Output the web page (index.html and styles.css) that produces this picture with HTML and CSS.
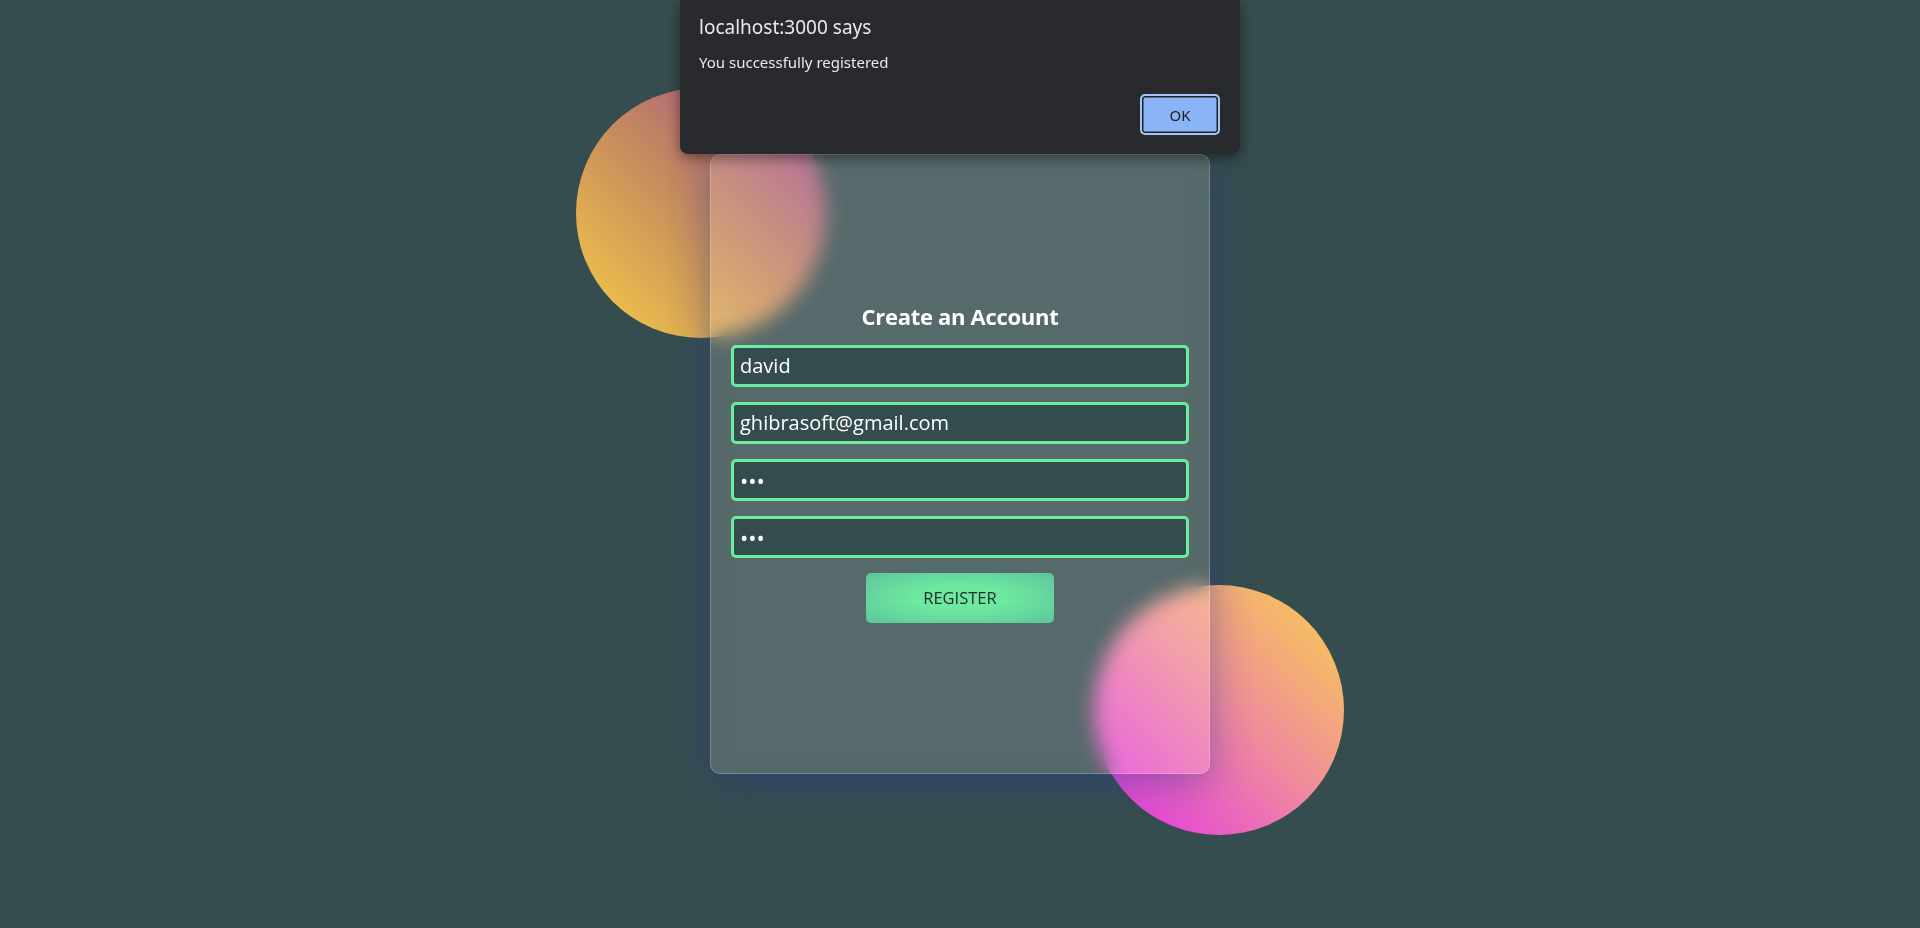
FILE: index.html
```html
<!DOCTYPE html>
<html lang="en">
<head>
<meta charset="utf-8">
<title>Register</title>
<link rel="stylesheet" href="styles.css">
</head>
<body>
<main class="scene">
  <div class="shape shape-a"></div>
  <div class="shape shape-b"></div>
  <form class="card">
    <h2 class="title">Create an Account</h2>
    <input class="field" type="text" value="david">
    <input class="field" type="email" value="ghibrasoft@gmail.com">
    <input class="field" type="password" value="abc">
    <input class="field" type="password" value="abc">
    <button class="register" type="button">REGISTER</button>
  </form>
</main>
<div class="alert" role="alertdialog">
  <div class="alert-title">localhost:3000 says</div>
  <div class="alert-msg">You successfully registered</div>
  <div class="alert-actions"><button class="alert-ok" type="button">OK</button></div>
</div>
</body>
</html>
```
FILE: styles.css
```css
* { box-sizing: border-box; }
html, body { height: 100%; }
body {
  margin: 0;
  background: #364d4f;
  display: flex;
  align-items: center;
  justify-content: center;
  font-family: "Open Sans", "Noto Sans", sans-serif;
  overflow: hidden;
}
.scene {
  position: relative;
  width: 500px;
  height: 620px;
}
.shape {
  position: absolute;
  width: 250px;
  height: 250px;
  border-radius: 50%;
}
.shape-a {
  left: -134px;
  top: -66px;
  background: linear-gradient(45deg, #ecbe4c 12%, #c68a5e 50%, #a4528a 90%);
}
.shape-b {
  right: -134px;
  bottom: -61px;
  background: linear-gradient(45deg, #e646da 12%, #f08b9c 52%, #f7c35c 90%);
}
.card {
  position: relative;
  width: 500px;
  height: 620px;
  margin: 0;
  padding: 0 20px;
  border: 1px solid rgba(255, 255, 255, 0.22);
  border-radius: 10px;
  background: rgba(255, 255, 255, 0.16);
  backdrop-filter: blur(10px);
  box-shadow: 0 8px 40px rgba(40, 55, 140, 0.45);
  display: flex;
  flex-direction: column;
  align-items: center;
  justify-content: center;
}
.title {
  margin: 0 0 19px;
  font-size: 22px;
  line-height: 20px;
  font-weight: 700;
  color: #ffffff;
  letter-spacing: -0.3px;
}
.field {
  width: 100%;
  height: 42px;
  margin: 0 0 15px;
  padding: 0 6px;
  border: 3px solid #6deb9e;
  border-radius: 5px;
  background: #354c4e;
  color: #ffffff;
  font-family: "Open Sans", "Noto Sans", sans-serif;
  font-size: 20px;
  outline: none;
}
.field[type="password"] { font-size: 22px; }
.register {
  width: 188px;
  height: 50px;
  margin: 0;
  border: none;
  border-radius: 5px;
  background: radial-gradient(ellipse at center, #6ee8a0 35%, #5cc59c 100%);
  color: #16302a;
  font-family: "Open Sans", "Noto Sans", sans-serif;
  font-size: 16.5px;
}
.alert {
  position: fixed;
  top: 0;
  left: 50%;
  transform: translateX(-50%);
  width: 560px;
  height: 154px;
  padding: 16px 20px 19px 19px;
  background: #292a2d;
  border-radius: 0 0 8px 8px;
  box-shadow: 0 4px 14px rgba(0, 0, 0, 0.45);
  font-family: "Noto Sans", "Open Sans", sans-serif;
  color: #e8eaed;
  display: flex;
  flex-direction: column;
}
.alert-title {
  font-size: 19px;
  line-height: 22px;
}
.alert-msg {
  margin-top: 14px;
  font-size: 15px;
  line-height: 20px;
}
.alert-actions {
  margin-top: auto;
  display: flex;
  justify-content: flex-end;
}
.alert-ok {
  width: 80px;
  height: 41px;
  border: 2px solid #a6c4f7;
  border-radius: 5px;
  background: #8ab4f8;
  box-shadow: inset 0 0 0 1.5px #202124;
  color: #202124;
  font-family: "Noto Sans", "Open Sans", sans-serif;
  font-size: 15px;
}
```
